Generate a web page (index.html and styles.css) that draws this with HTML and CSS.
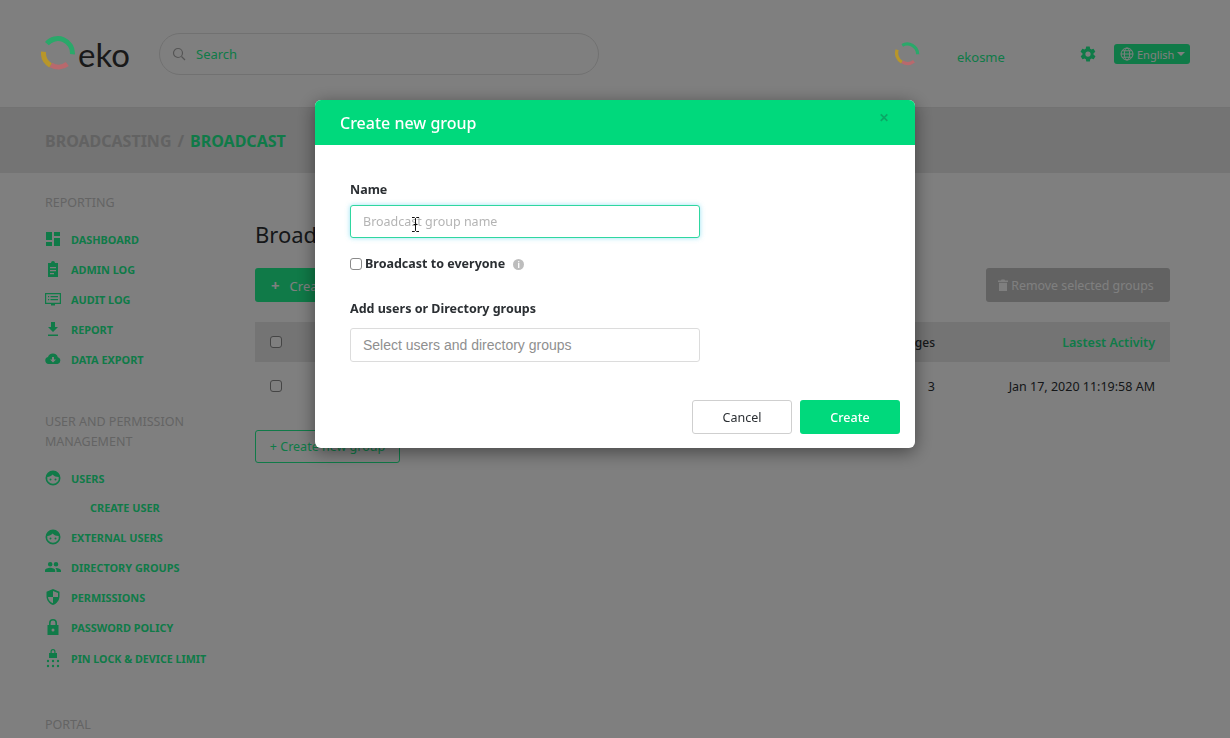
FILE: index.html
```html
<!DOCTYPE html>
<html lang="en">
<head>
  <meta charset="UTF-8">
  <meta name="viewport" content="width=device-width, initial-scale=1.0">
  <title>Eko - Broadcast</title>
  <link rel="stylesheet" href="styles.css">
</head>
<body>
  <header class="topbar">
    <div class="logo">
      <svg class="ring" width="36" height="36" viewBox="0 0 36 36" fill="none" stroke-width="5">
        <path d="M5.900 7.700 A14.500 14.500 0 0 1 31.400 18.300" stroke="#2aa86a"/>
        <path d="M26.300 28.100 A14.500 14.500 0 0 1 10 29" stroke="#b8696d"/>
        <path d="M9.500 29.300 A14.500 14.500 0 0 1 2.500 15.700" stroke="#b8962a"/>
      </svg>
      <span class="logo-text">eko</span>
    </div>
    <div class="search">
      <svg width="14" height="14" viewBox="0 0 14 14" fill="none" stroke="#aaa" stroke-width="1.200"><circle cx="6" cy="6" r="4.500"/><path d="M9.500 9.500 13 13"/></svg>
      <span>Search</span>
    </div>
    <div class="account">
      <svg class="ring" width="26" height="26" viewBox="0 0 36 36" fill="none" stroke-width="4.500">
        <path d="M10 6 A14.500 14.500 0 0 1 31.400 18.300" stroke="#2aa86a"/>
        <path d="M26.300 28.100 A14.500 14.500 0 0 1 10 29" stroke="#b8696d"/>
        <path d="M9.500 29.300 A14.500 14.500 0 0 1 3 12" stroke="#b8962a"/>
      </svg>
      <span class="username">ekosme</span>
      <svg class="gear" width="18" height="18" viewBox="0 0 24 24"><path d="M19.400 13a7.600 7.600 0 0 0 0-2l2.100-1.600a.5.5 0 0 0 .1-.6l-2-3.500a.5.5 0 0 0-.6-.2l-2.500 1a7.300 7.300 0 0 0-1.700-1l-.4-2.700a.5.500 0 0 0-.5-.4h-4a.5.500 0 0 0-.5.400l-.4 2.700a7.300 7.300 0 0 0-1.700 1l-2.500-1a.5.500 0 0 0-.6.200l-2 3.500a.5.500 0 0 0 .1.600L4.600 11a7.600 7.600 0 0 0 0 2l-2.100 1.600a.5.500 0 0 0-.1.600l2 3.500a.5.500 0 0 0 .6.200l2.500-1a7.300 7.300 0 0 0 1.700 1l.4 2.700a.5.500 0 0 0 .5.400h4a.5.500 0 0 0 .5-.400l.4-2.700a7.300 7.300 0 0 0 1.700-1l2.500 1a.5.500 0 0 0 .6-.200l2-3.500a.5.500 0 0 0-.1-.6zM12 15.500a3.500 3.500 0 1 1 0-7 3.500 3.500 0 0 1 0 7z"/></svg>
      <div class="lang">
        <svg width="14" height="14" viewBox="0 0 14 14" fill="none" stroke="#fff" stroke-width="1"><circle cx="7" cy="7" r="6"/><ellipse cx="7" cy="7" rx="2.700" ry="6"/><path d="M1 7h12M2 3.800h10M2 10.200h10"/></svg>
        <span>English</span>
        <i class="caret"></i>
      </div>
    </div>
  </header>

  <div class="crumbs">
    <span class="crumb-parent">BROADCASTING</span>
    <span class="crumb-sep">/</span>
    <span class="crumb-current">BROADCAST</span>
  </div>

  <div class="layout">
    <nav class="sidebar">
      <h4 class="nav-title">REPORTING</h4>
      <a class="nav-item"><svg class="nav-icon" viewBox="0 0 16 16"><path d="M1 1h6v8H1zM9 1h6v4H9zM1 11h6v4H1zM9 7h6v8H9z"/></svg>DASHBOARD</a>
      <a class="nav-item"><svg class="nav-icon" viewBox="0 0 16 16"><path fill-rule="evenodd" d="M3 2h3a2 2 0 0 1 4 0h3v14H3zM5 6v1.200h6V6zM5 9v1.200h6V9zM5 12v1.200h4V12z"/></svg>ADMIN LOG</a>
      <a class="nav-item"><svg class="nav-icon" viewBox="0 0 16 16"><path fill-rule="evenodd" d="M0 2h16v11h-6v1.500H6V13H0zM1.200 3.200v8.600h13.600V3.200zM3 5h1.200v1.200H3zM5.500 5H13v1.200H5.500zM3 8h1.200v1.200H3zM5.500 8H13v1.200H5.500z"/></svg>AUDIT LOG</a>
      <a class="nav-item"><svg class="nav-icon" viewBox="0 0 16 16"><path d="M6 1h4v5h3l-5 5-5-5h3zM3 13.500h10V15H3z"/></svg>REPORT</a>
      <a class="nav-item"><svg class="nav-icon" viewBox="0 0 16 16"><path fill-rule="evenodd" d="M8 2.500a5 5 0 0 1 4.800 3.700A3.500 3.500 0 0 1 12.500 13h-9A3.500 3.500 0 0 1 3 6.100 5 5 0 0 1 8 2.500zM7 6v2.500H5l3 3 3-3H9V6z"/></svg>DATA EXPORT</a>

      <h4 class="nav-title nav-title-gap">USER AND PERMISSION MANAGEMENT</h4>
      <a class="nav-item"><svg class="nav-icon" viewBox="0 0 16 16"><path fill-rule="evenodd" d="M8 .5a7.500 7.500 0 1 1 0 15 7.500 7.500 0 0 1 0-15zM2.300 7A5.800 5.800 0 1 0 13.700 7C11 7 9 6.200 7.500 4.500 6.500 6 4.500 7 2.300 7zM5.500 8.500a1 1 0 1 1 0 2 1 1 0 0 1 0-2zM10.500 8.500a1 1 0 1 1 0 2 1 1 0 0 1 0-2z"/></svg>USERS</a>
      <a class="nav-sub">CREATE USER</a>
      <a class="nav-item"><svg class="nav-icon" viewBox="0 0 16 16"><path fill-rule="evenodd" d="M8 .5a7.500 7.500 0 1 1 0 15 7.500 7.500 0 0 1 0-15zM2.300 7A5.800 5.800 0 1 0 13.700 7C11 7 9 6.200 7.500 4.500 6.500 6 4.500 7 2.300 7zM5.500 8.500a1 1 0 1 1 0 2 1 1 0 0 1 0-2zM10.500 8.500a1 1 0 1 1 0 2 1 1 0 0 1 0-2z"/></svg>EXTERNAL USERS</a>
      <a class="nav-item"><svg class="nav-icon" viewBox="0 0 16 16"><path d="M5.200 3a2.300 2.300 0 1 1 0 4.600 2.300 2.300 0 0 1 0-4.600zM11 3a2.300 2.300 0 1 1 0 4.600A2.300 2.300 0 0 1 11 3zM0 13v-1.500C0 9.800 3 8.800 5.200 8.800s5 1 5 2.700V13zM11.500 13v-1.500c0-1-.4-1.800-1.100-2.500 2.200-.3 5.600.6 5.600 2.500V13z"/></svg>DIRECTORY GROUPS</a>
      <a class="nav-item"><svg class="nav-icon" viewBox="0 0 16 16"><path fill-rule="evenodd" d="M8 0l6.500 2.700v4.500c0 3.900-2.700 7.400-6.500 8.800-3.800-1.400-6.500-4.900-6.500-8.800V2.700zM8 2v6H3c.1 2.800 2.200 5.300 5 6.300V8h5V3.900z"/></svg>PERMISSIONS</a>
      <a class="nav-item"><svg class="nav-icon" viewBox="0 0 16 16"><path fill-rule="evenodd" d="M8 0a4 4 0 0 1 4 4v2h1.500v10h-11V6H4V4a4 4 0 0 1 4-4zM8 1.600A2.400 2.400 0 0 0 5.600 4v2h4.800V4A2.400 2.400 0 0 0 8 1.600zM8 9.500a1.500 1.500 0 1 0 0 3 1.500 1.500 0 0 0 0-3z"/></svg>PASSWORD POLICY</a>
      <a class="nav-item nav-item-tall"><svg class="nav-icon nav-icon-tall" viewBox="0 0 16 20"><path fill-rule="evenodd" d="M8 0a2.500 2.500 0 0 1 2.500 2.500V4H12v5H4V4h1.500V2.500A2.500 2.500 0 0 1 8 0zM8 1.200A1.300 1.300 0 0 0 6.700 2.500V4h2.600V2.500A1.300 1.300 0 0 0 8 1.200z"/><circle cx="3" cy="12" r="1.200"/><circle cx="8" cy="12" r="1.200"/><circle cx="13" cy="12" r="1.200"/><circle cx="3" cy="17" r="1.200"/><circle cx="8" cy="17" r="1.200"/><circle cx="13" cy="17" r="1.200"/></svg>PIN LOCK &amp; DEVICE LIMIT</a>

      <h4 class="nav-title nav-title-portal">PORTAL</h4>
    </nav>

    <main class="main">
      <h2 class="page-title">Broadcast</h2>
      <div class="toolbar">
        <button class="btn-add"><span class="plus">+</span>Create new group</button>
        <button class="btn-remove">
          <svg width="10" height="12" viewBox="0 0 10 12" fill="#fff"><path d="M0 1.500h3L3.500.5h3l.5 1h3V3H0zM1 3.800h8V12H1z"/></svg>
          Remove selected groups
        </button>
      </div>
      <table class="groups">
        <thead>
          <tr>
            <th class="col-check"><span class="box"></span></th>
            <th class="col-name">Name</th>
            <th class="col-count">Messages</th>
            <th class="col-date">Lastest Activity</th>
          </tr>
        </thead>
        <tbody>
          <tr>
            <td class="col-check"><span class="box"></span></td>
            <td class="col-name">Everyone</td>
            <td class="col-count">3</td>
            <td class="col-date">Jan 17, 2020 11:19:58 AM</td>
          </tr>
        </tbody>
      </table>
      <button class="btn-outline">+ Create new group</button>
    </main>
  </div>

  <div class="backdrop">
    <section class="modal">
      <div class="modal-head">
        <h3>Create new group</h3>
        <span class="modal-close">&#10005;</span>
      </div>
      <div class="modal-body">
        <label class="field-label">Name</label>
        <div class="input input-focus">Broadcast group name
          <svg class="cursor" width="9" height="15" viewBox="0 0 9 15" fill="none" stroke="#111" stroke-width="1"><path d="M1 .5h2.500L4.500 1.500 5.500.5H8M4.500 1.500v12M1 14.500h2.500l1-1 1 1H8M2.500 7.500h4"/></svg>
        </div>
        <div class="check-row">
          <span class="box box-white"></span>
          <span class="check-label">Broadcast to everyone</span>
          <span class="info">i</span>
        </div>
        <label class="field-label label-users">Add users or Directory groups</label>
        <div class="input input-select">Select users and directory groups</div>
      </div>
      <div class="modal-foot">
        <button class="btn-cancel">Cancel</button>
        <button class="btn-create">Create</button>
      </div>
    </section>
  </div>
</body>
</html>
```

FILE: styles.css
```css
* {
  box-sizing: border-box;
}
html, body {
  height: 738px;
  overflow: hidden;
}
body {
  margin: 0;
  background-color: #fff;
  color: #2b2f33;
  font-family: "Noto Sans", Arial, sans-serif;
  font-size: 13px;
}
button {
  font-family: inherit;
  cursor: pointer;
}

/* top bar */
.topbar {
  height: 108px;
  padding: 33px 40px 0 40px;
  display: flex;
  align-items: flex-start;
  border-bottom: 1px solid #e4e4e4;
}
.logo {
  width: 119px;
  height: 42px;
  padding-left: 1px;
  display: flex;
  align-items: center;
  gap: 1px;
}
.logo-text {
  font-family: Lato, sans-serif;
  font-size: 33px;
  line-height: 40px;
  color: #333;
}
/* ring colours stay bright over the backdrop */
.ring {
  position: relative;
  z-index: 2;
  flex: none;
}
.search {
  width: 440px;
  height: 42px;
  display: flex;
  align-items: center;
  gap: 10px;
  padding-left: 12px;
  border: 1px solid #e2e2e2;
  border-radius: 21px;
  color: #20f590;
  font-size: 13px;
}
.account {
  flex: 1;
  height: 42px;
  display: flex;
  align-items: center;
  padding-left: 296px;
}
.username {
  margin-left: 36px;
  margin-top: 6px;
  width: 122px;
  color: #20f590;
  font-size: 13px;
}
.gear {
  flex: none;
  fill: #20f590;
}
.lang {
  margin-left: 17px;
  width: 76px;
  height: 20px;
  display: flex;
  align-items: center;
  gap: 3px;
  padding-left: 6px;
  border-radius: 3px;
  background-color: #20f590;
  color: #fff;
  font-size: 11px;
}
.caret {
  width: 0;
  height: 0;
  border-left: 4px solid transparent;
  border-right: 4px solid transparent;
  border-top: 4px solid #fff;
}

/* breadcrumb */
.crumbs {
  height: 65px;
  padding-left: 45px;
  display: flex;
  align-items: center;
  gap: 6px;
  background-color: #e8e8e8;
  font-size: 16px;
  font-weight: 700;
}
.crumb-parent, .crumb-sep {
  color: #c4c4c4;
}
.crumb-current {
  color: #20f590;
}

/* sidebar */
.layout {
  display: flex;
}
.sidebar {
  width: 210px;
  margin-left: 45px;
  padding-top: 20px;
  flex: none;
}
.nav-title {
  margin: 0 0 11px 0;
  width: 170px;
  font-size: 12.500px;
  line-height: 20px;
  font-weight: 400;
  color: #c8c8c8;
}
.nav-title-gap {
  margin-top: 38px;
  margin-bottom: 11px;
}
.nav-title-portal {
  margin-top: 39px;
}
.nav-item {
  height: 30px;
  display: flex;
  align-items: center;
  gap: 10px;
  color: #20f590;
  font-size: 10.900px;
  font-weight: 700;
}
.nav-item-tall {
  height: 34px;
  font-size: 10.700px;
}
.nav-sub {
  display: block;
  height: 29px;
  line-height: 29px;
  padding-left: 45px;
  color: #20f590;
  font-size: 10.900px;
  font-weight: 700;
}
.nav-icon {
  width: 16px;
  height: 16px;
  flex: none;
  fill: #20f590;
}
.nav-icon-tall {
  height: 20px;
}

/* main */
.main {
  flex: 1;
  padding: 0 60px 0 0;
  min-width: 0;
}
.page-title {
  margin: 43px 0 0 0;
  height: 52px;
  font-size: 22px;
  line-height: 36px;
  font-weight: 400;
  color: #2b2f33;
}
.toolbar {
  height: 34px;
  display: flex;
  justify-content: space-between;
}
.btn-add {
  width: 150px;
  border: none;
  border-radius: 3px;
  background-color: #20f590;
  color: #fff;
  font-size: 13px;
  text-align: left;
  padding-left: 16px;
}
.plus {
  margin-right: 10px;
  font-size: 15px;
  font-weight: 700;
}
.btn-remove {
  width: 184px;
  display: flex;
  align-items: center;
  justify-content: center;
  gap: 3px;
  padding-left: 2px;
  border: none;
  border-radius: 3px;
  background-color: #c4c4c4;
  color: #fff;
  font-size: 12.400px;
}
.groups {
  width: 100%;
  margin-top: 20px;
  border-collapse: collapse;
  table-layout: fixed;
}
.groups th {
  height: 40px;
  background-color: #e8e8e8;
  font-size: 12px;
  font-weight: 500;
  text-align: left;
}
.groups td {
  height: 48px;
  font-size: 12.500px;
}
.col-check {
  width: 60px;
  padding-left: 15px;
  vertical-align: middle;
}
.col-name {
  width: 400px;
}
.groups .col-count {
  width: 221px;
  text-align: right;
}
.groups .col-date {
  text-align: right;
  padding-right: 15px;
}
.groups th.col-date {
  color: #20f590;
  font-size: 12.500px;
  font-weight: 600;
}
.box {
  display: block;
  width: 12px;
  height: 12px;
  border: 1px solid #8a8a8a;
  border-radius: 3px;
  background-color: #fff;
}
.btn-outline {
  display: block;
  width: 145px;
  height: 33px;
  margin-top: 20px;
  border: 1px solid #20f590;
  border-radius: 3px;
  background-color: #fff;
  color: #20f590;
  font-size: 12.500px;
}

/* modal */
.backdrop {
  position: fixed;
  inset: 0;
  display: flex;
  justify-content: center;
  align-items: flex-start;
  padding-top: 100px;
  background-color: rgba(0, 0, 0, 0.5);
}
.modal {
  width: 600px;
  height: 348px;
  background-color: #fff;
  border-radius: 6px;
  box-shadow: 0 4px 18px rgba(0, 0, 0, 0.45);
  overflow: hidden;
}
.modal-head {
  height: 45px;
  padding: 0 25px;
  display: flex;
  justify-content: space-between;
  align-items: center;
  background-color: #00d97c;
}
.modal-head h3 {
  margin: 0;
  color: #fff;
  font-size: 16px;
  font-weight: 500;
}
.modal-close {
  margin-top: -10px;
  margin-right: 1px;
  color: #0aa866;
  font-size: 12px;
  font-weight: 700;
}
.modal-body {
  padding: 36px 35px 0 35px;
}
.field-label {
  display: block;
  font-size: 12.500px;
  line-height: 18px;
  font-weight: 700;
  color: #2b2f33;
}
.input {
  position: relative;
  width: 350px;
  height: 34px;
  padding-left: 12px;
  display: flex;
  align-items: center;
  border: 1px solid #dcdcdc;
  border-radius: 3px;
  background-color: #fff;
  color: #b4b4b4;
  font-size: 12.500px;
}
.input-focus {
  height: 33px;
  margin-top: 6px;
  border-color: #2fd7a0;
  box-shadow: 0 0 5px rgba(110, 215, 240, 0.7);
}
.input-select {
  margin-top: 10px;
  color: #8f8f8f;
  font-family: "Liberation Sans", Arial, sans-serif;
  font-size: 14px;
}
.cursor {
  position: absolute;
  left: 60px;
  top: 11px;
}
.check-row {
  margin-top: 19px;
  height: 14px;
  display: flex;
  align-items: center;
}
.box-white {
  margin-right: 3px;
}
.check-label {
  margin-top: -1px;
  font-size: 12.500px;
  font-weight: 700;
}
.info {
  width: 11px;
  height: 11px;
  margin-left: 8px;
  border-radius: 50%;
  background-color: #bdbdbd;
  color: #fff;
  font-size: 8px;
  line-height: 11px;
  text-align: center;
  font-weight: 700;
}
.label-users {
  margin-top: 29px;
}
.modal-foot {
  margin-top: 38px;
  padding-right: 15px;
  display: flex;
  justify-content: flex-end;
  gap: 8px;
}
.btn-cancel, .btn-create {
  width: 100px;
  height: 34px;
  border-radius: 3px;
  font-size: 12.500px;
}
.btn-cancel {
  border: 1px solid #cfcfcf;
  background-color: #fff;
  color: #2b2f33;
}
.btn-create {
  border: none;
  background-color: #00d97c;
  color: #fff;
  font-weight: 500;
}
```
